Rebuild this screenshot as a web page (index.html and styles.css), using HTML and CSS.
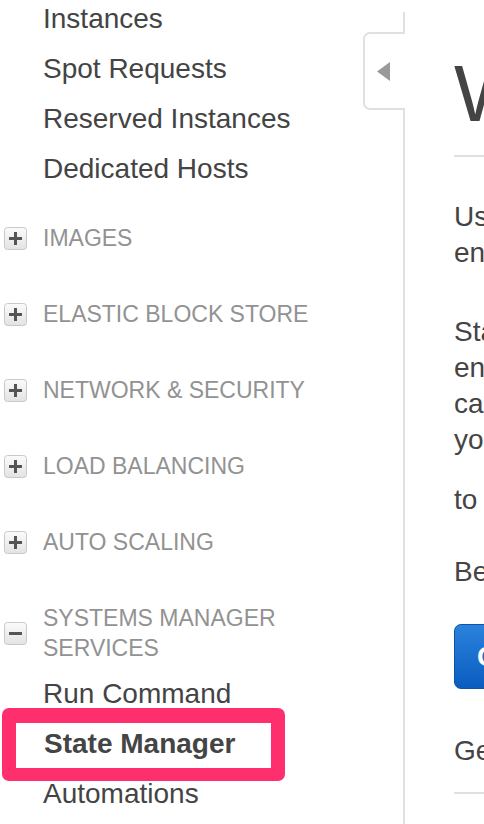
FILE: index.html
```html
<!DOCTYPE html>
<html lang="en">
<head>
<meta charset="utf-8">
<title>EC2 Console - State Manager</title>
<link rel="stylesheet" href="styles.css">
</head>
<body>
<div class="layout">
  <nav class="sidebar">
    <ul class="items items-first">
      <li>Instances</li>
      <li>Spot Requests</li>
      <li>Reserved Instances</li>
      <li>Dedicated Hosts</li>
    </ul>

    <div class="section">
      <div class="section-head">
        <svg class="toggle" viewBox="0 0 23 23" width="23" height="23"><defs><linearGradient id="g1" x1="0" y1="0" x2="0" y2="1"><stop offset="0" stop-color="#fbfbfb"/><stop offset="1" stop-color="#e3e3e3"/></linearGradient></defs><rect x="0.5" y="0.5" width="22" height="22" rx="3" fill="url(#g1)" stroke="#c9c9c9"/><rect x="5" y="10" width="13" height="3" fill="#555"/><rect x="10" y="5" width="3" height="13" fill="#555"/></svg>
        <span class="label">IMAGES</span>
      </div>
    </div>

    <div class="section">
      <div class="section-head">
        <svg class="toggle" viewBox="0 0 23 23" width="23" height="23"><rect x="0.5" y="0.5" width="22" height="22" rx="3" fill="url(#g1)" stroke="#c9c9c9"/><rect x="5" y="10" width="13" height="3" fill="#555"/><rect x="10" y="5" width="3" height="13" fill="#555"/></svg>
        <span class="label">ELASTIC BLOCK STORE</span>
      </div>
    </div>

    <div class="section">
      <div class="section-head">
        <svg class="toggle" viewBox="0 0 23 23" width="23" height="23"><rect x="0.5" y="0.5" width="22" height="22" rx="3" fill="url(#g1)" stroke="#c9c9c9"/><rect x="5" y="10" width="13" height="3" fill="#555"/><rect x="10" y="5" width="3" height="13" fill="#555"/></svg>
        <span class="label">NETWORK &amp; SECURITY</span>
      </div>
    </div>

    <div class="section">
      <div class="section-head">
        <svg class="toggle" viewBox="0 0 23 23" width="23" height="23"><rect x="0.5" y="0.5" width="22" height="22" rx="3" fill="url(#g1)" stroke="#c9c9c9"/><rect x="5" y="10" width="13" height="3" fill="#555"/><rect x="10" y="5" width="3" height="13" fill="#555"/></svg>
        <span class="label">LOAD BALANCING</span>
      </div>
    </div>

    <div class="section">
      <div class="section-head">
        <svg class="toggle" viewBox="0 0 23 23" width="23" height="23"><rect x="0.5" y="0.5" width="22" height="22" rx="3" fill="url(#g1)" stroke="#c9c9c9"/><rect x="5" y="10" width="13" height="3" fill="#555"/><rect x="10" y="5" width="3" height="13" fill="#555"/></svg>
        <span class="label">AUTO SCALING</span>
      </div>
    </div>

    <div class="section section-open">
      <div class="section-head">
        <svg class="toggle" viewBox="0 0 23 23" width="23" height="23"><rect x="0.5" y="0.5" width="22" height="22" rx="3" fill="url(#g1)" stroke="#c9c9c9"/><rect x="5" y="10" width="13" height="3" fill="#555"/></svg>
        <span class="label">SYSTEMS MANAGER SERVICES</span>
      </div>
      <ul class="items items-sub">
        <li>Run Command</li>
        <li class="active">State Manager<span class="highlight"></span></li>
        <li>Automations</li>
      </ul>
    </div>
  </nav>

  <div class="divider">
    <div class="collapse-tab">
      <svg viewBox="0 0 13 19" width="13" height="19"><polygon points="0,9.5 13,0 13,19" fill="#999"/></svg>
    </div>
  </div>

  <main class="content">
    <h1 class="title">Welcome to State Manager</h1>
    <p class="para">Use State Manager to automate the process of keeping your<br>environment in a consistent, defined state.</p>
    <p class="para">State Manager lets you define associations that<br>enforce configuration on your managed instances. You<br>can schedule configurations to be applied and monitor<br>your instances for compliance with those policies, and<br><span class="para-line-spaced">to remediate drift automatically.</span></p>
    <p class="para para-short">Before you begin, verify your instances are managed.</p>
    <button class="btn-primary" type="button">Create Association</button>
    <h2 class="subtitle">Getting Started</h2>
  </main>
</div>
</body>
</html>
```

FILE: styles.css
```css
* { box-sizing: border-box; }

html, body {
  margin: 0;
  padding: 0;
  background: #fff;
  overflow: hidden;
}

body {
  font-family: "Liberation Sans", Arial, Helvetica, sans-serif;
  color: #444;
  width: 484px;
  height: 824px;
}

.layout {
  display: flex;
  align-items: stretch;
  height: 824px;
}

/* ---------- sidebar ---------- */
.sidebar {
  width: 403px;
  flex: none;
  padding-left: 4px;
  margin-top: -6px;
}

.items {
  list-style: none;
  margin: 0;
  padding: 0 0 0 39px;
}

.items li {
  font-size: 28px;
  line-height: 50px;
  color: #444;
  white-space: nowrap;
}

.items li.active {
  position: relative;
  font-weight: bold;
  padding-left: 1px;
}

.highlight {
  position: absolute;
  left: -41px;
  top: -11px;
  width: 283px;
  height: 73px;
  border: 14px solid #ff2e6c;
  border-top-width: 15px;
  border-bottom-width: 13px;
  border-radius: 7px;
  pointer-events: none;
}

.section {
  padding-top: 29px;
  padding-bottom: 17px;
}

.section-head {
  display: flex;
  align-items: center;
  gap: 16px;
  width: 330px;
}

.toggle {
  flex: none;
  display: block;
}

.label {
  font-size: 23px;
  line-height: 30px;
  color: #929292;
}

.section-open {
  padding-bottom: 0;
}

.items-sub {
  margin-top: 6px;
}

/* ---------- divider ---------- */
.divider {
  position: relative;
  flex: none;
  width: 2px;
  margin-top: 12px;
  background: #e0e0e0;
}

.collapse-tab {
  position: absolute;
  left: -40px;
  top: 20px;
  width: 42px;
  height: 78px;
  background: #fff;
  border: 2px solid #e0e0e0;
  border-right: none;
  border-radius: 7px 0 0 7px;
  display: flex;
  align-items: center;
  padding-left: 12px;
}

.collapse-tab svg { display: block; }

/* ---------- content ---------- */
.content {
  flex: 1;
  min-width: 0;
  overflow: hidden;
  padding-left: 49px;
  white-space: nowrap;
}

.title {
  margin: 48px 0 0 0;
  font-size: 80px;
  line-height: 92px;
  font-weight: normal;
  color: #444;
  padding-bottom: 15px;
  border-bottom: 2px solid #e0e0e0;
}

.para {
  margin: 42px 0 0 0;
  font-size: 28px;
  line-height: 36px;
  color: #444;
}

.para + .para { margin-top: 43px; }

.para-line-spaced {
  display: block;
  padding-top: 24px;
}

.para + .para-short { margin-top: 36px; }

.btn-primary {
  display: block;
  margin-top: 34px;
  height: 65px;
  padding: 0 22px;
  border: 1px solid #0f52a8;
  border-radius: 7px;
  background: linear-gradient(#2a83dc, #0b5cc0);
  color: #fff;
  font-family: "Liberation Sans", Arial, sans-serif;
  font-size: 28px;
  font-weight: bold;
  white-space: nowrap;
}

.subtitle {
  margin: 44px 0 0 0;
  font-size: 28px;
  line-height: 36px;
  font-weight: normal;
  color: #444;
  padding-bottom: 23px;
  border-bottom: 2px solid #e0e0e0;
}
```
